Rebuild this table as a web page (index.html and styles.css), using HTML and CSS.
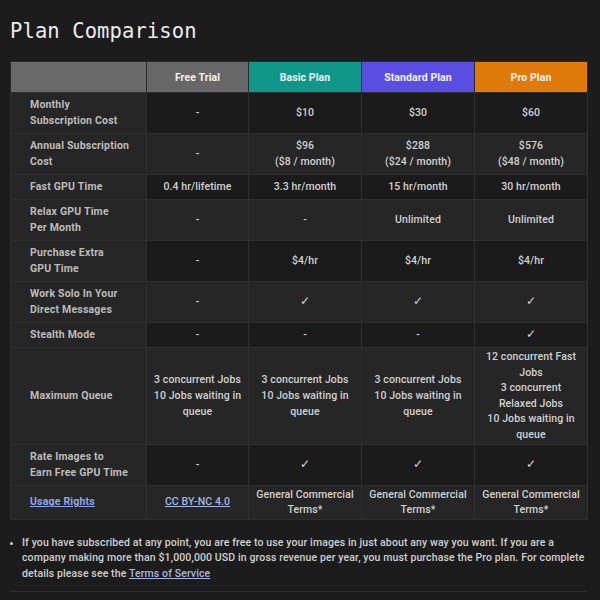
FILE: index.html
```html
<!DOCTYPE html>
<html>
<head>
<meta charset="utf-8">
<link rel="stylesheet" href="styles.css">
</head>
<body>
<div class="page">
  <h1 class="title">Plan Comparison</h1>
  <table class="plans">
    <colgroup>
      <col class="c-label"><col class="c-free"><col class="c-plan"><col class="c-plan"><col class="c-plan">
    </colgroup>
    <thead>
      <tr>
        <th class="h-blank"></th>
        <th class="h-free">Free Trial</th>
        <th class="h-basic">Basic Plan</th>
        <th class="h-std">Standard Plan</th>
        <th class="h-pro">Pro Plan</th>
      </tr>
    </thead>
    <tbody>
      <tr class="dark">
        <td class="lbl">Monthly<br>Subscription Cost</td>
        <td>-</td><td>$10</td><td>$30</td><td>$60</td>
      </tr>
      <tr class="light">
        <td class="lbl">Annual Subscription Cost</td>
        <td>-</td><td>$96<br>($8 / month)</td><td>$288<br>($24 / month)</td><td>$576<br>($48 / month)</td>
      </tr>
      <tr class="dark">
        <td class="lbl">Fast GPU Time</td>
        <td>0.4 hr/lifetime</td><td>3.3 hr/month</td><td>15 hr/month</td><td>30 hr/month</td>
      </tr>
      <tr class="light">
        <td class="lbl">Relax GPU Time<br>Per Month</td>
        <td>-</td><td>-</td><td>Unlimited</td><td>Unlimited</td>
      </tr>
      <tr class="dark">
        <td class="lbl">Purchase Extra<br>GPU Time</td>
        <td>-</td><td>$4/hr</td><td>$4/hr</td><td>$4/hr</td>
      </tr>
      <tr class="light">
        <td class="lbl">Work Solo In Your<br>Direct Messages</td>
        <td>-</td><td class="chk">✓</td><td class="chk">✓</td><td class="chk">✓</td>
      </tr>
      <tr class="dark">
        <td class="lbl">Stealth Mode</td>
        <td>-</td><td>-</td><td>-</td><td class="chk">✓</td>
      </tr>
      <tr class="light">
        <td class="lbl">Maximum Queue</td>
        <td>3 concurrent Jobs<br>10 Jobs waiting in queue</td>
        <td>3 concurrent Jobs<br>10 Jobs waiting in queue</td>
        <td>3 concurrent Jobs<br>10 Jobs waiting in queue</td>
        <td>12 concurrent Fast Jobs<br>3 concurrent Relaxed Jobs<br>10 Jobs waiting in queue</td>
      </tr>
      <tr class="dark">
        <td class="lbl">Rate Images to<br>Earn Free GPU Time</td>
        <td>-</td><td class="chk">✓</td><td class="chk">✓</td><td class="chk">✓</td>
      </tr>
      <tr class="light">
        <td class="lbl"><a class="link-strong" href="#">Usage Rights</a></td>
        <td><a class="link" href="#">CC BY-NC 4.0</a></td>
        <td>General Commercial Terms*</td>
        <td>General Commercial Terms*</td>
        <td>General Commercial Terms*</td>
      </tr>
    </tbody>
  </table>
  <ul class="notes">
    <li>If you have subscribed at any point, you are free to use your images in just about any way you want. If you are a company making more than $1,000,000 USD in gross revenue per year, you must purchase the Pro plan. For complete details please see the <a class="link" href="#">Terms of Service</a></li>
  </ul>
  <div class="rule"></div>
</div>
</body>
</html>
```
FILE: styles.css
```css
html, body {
  margin: 0;
  padding: 0;
  background: #1c1c1c;
}
.page {
  width: 577px;
  padding: 0 10px;
  font-family: Roboto, "Liberation Sans", sans-serif;
  color: #cfcfcf;
}
.title {
  font-family: "DejaVu Sans Mono", "Liberation Mono", monospace;
  font-weight: 400;
  font-size: 20.5px;
  line-height: 24px;
  color: #ececec;
  margin: 19px 0 18px 0;
  letter-spacing: 0.1px;
}
.plans {
  width: 577px;
  table-layout: fixed;
  border-collapse: collapse;
  font-size: 10.5px;
  font-weight: 500;
  letter-spacing: 0.1px;
}
.c-label { width: 136px; }
.c-free { width: 102px; }
.c-plan { width: 113px; }
.plans th {
  height: 30px;
  padding: 0 4px;
  font-weight: 700;
  color: #f2f2f2;
  text-align: center;
  border: 1px solid #2a2a2a;
  border-bottom: none;
}
.h-blank { background: #6a6a6a; }
.h-free { background: #676767; }
.h-basic { background: #11968a; }
.h-std { background: #5a4ee2; }
.h-pro { background: #df7a0b; }
.plans td {
  border: 1px solid #303030;
  text-align: center;
  vertical-align: middle;
  padding: 1px 7px;
  line-height: 15.6px;
  color: #d2d2d2;
}
.plans td:nth-child(2) {
  padding: 1px 3px;
}
.plans td.lbl {
  text-align: left;
  padding: 4px 6px 4px 19px;
  line-height: 16px;
  font-weight: 700;
  color: #bcbcbc;
  background: #262626;
  letter-spacing: 0.2px;
}
.dark td { background: #1b1b1b; }
.light td { background: #262626; }
.chk { font-size: 12px; color: #dadada; }
.link {
  color: #a9b7e6;
  text-decoration: underline;
}
.link-strong {
  color: #8ea6ea;
  text-decoration: underline;
  font-weight: 700;
}
.notes {
  margin: 15px 0 0 0;
  padding: 0 0 0 12px;
  font-size: 10.5px;
  font-weight: 500;
  letter-spacing: 0.12px;
  line-height: 15.6px;
  color: #d0d0d0;
}
.notes li::marker { font-size: 9px; }
.rule {
  margin-top: 9px;
  height: 1px;
  background: #2e2e2e;
}
```
